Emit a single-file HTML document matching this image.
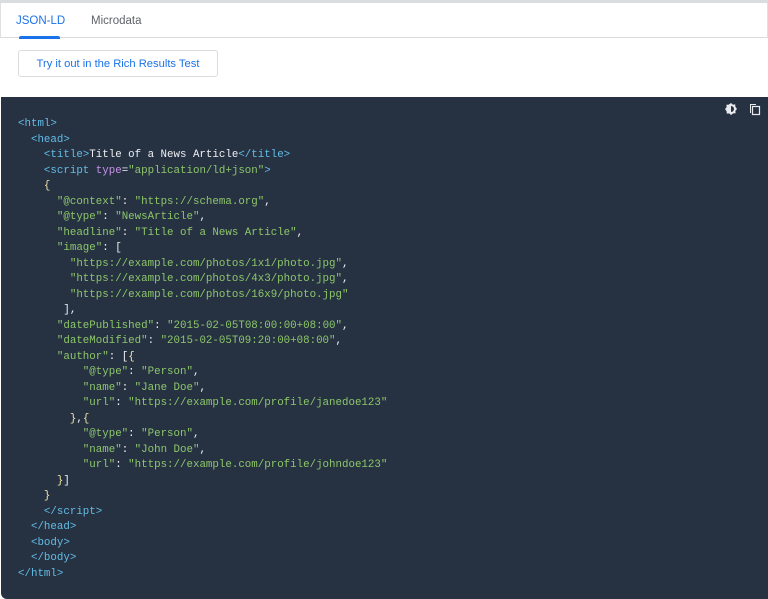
<!DOCTYPE html>
<html><head><meta charset="utf-8"><style>
body{margin:0;width:768px;height:599px;overflow:hidden;background:#fff;font-family:"Liberation Sans",sans-serif;position:relative}
.top{position:absolute;left:0;top:0;width:768px;height:3px;background:#dadce0}
.tabs{position:absolute;left:0;top:3px;width:768px;height:35px;border-bottom:1px solid #dadce0;border-left:1px solid #e0e0e0;border-right:1px solid #e0e0e0;box-sizing:border-box}
.tab{position:absolute;top:12px;font-size:11.5px;color:#5f6368}
.t1{left:15px;color:#1a73e8}
.ul{position:absolute;left:18px;top:33px;width:41px;height:3px;background:#1a73e8;border-radius:2px 2px 0 0}
.btn{position:absolute;left:18px;top:50px;width:200px;height:27px;border:1px solid #dadce0;border-radius:3px;box-sizing:border-box;color:#1a73e8;font-size:11.2px;text-align:center;line-height:27px}
.code{position:absolute;left:1px;top:97px;width:767px;height:502px;background:#263142;border-radius:0 0 0 6px}
pre{margin:0;position:absolute;left:18px;top:117px;font-family:"Liberation Mono",monospace;font-size:10.8px;line-height:15.5px;color:#eef0f2}
.t{color:#63bde6}.s{color:#8dc76a}.a{color:#c792ea}.b{color:#f0e6a8}
</style></head><body>
<div class="top"></div>
<div class="tabs"><span class="tab t1">JSON-LD</span><span class="tab" style="left:90px">Microdata</span><div class="ul"></div></div>
<div class="btn">Try it out in the Rich Results Test</div>
<div class="code">
<svg style="position:absolute;left:723px;top:5px" width="14" height="14" viewBox="0 0 14 14"><path d="M7 1l1.8 1.6 2.4-.2.2 2.4L13 7l-1.6 1.8.2 2.4-2.4.2L7 13l-1.8-1.6-2.4.2-.2-2.4L1 7l1.6-1.8-.2-2.4 2.4-.2z" fill="#e8eaed"/><path d="M7 4a3 3 0 0 1 0 6z" fill="#263142"/></svg>
<svg style="position:absolute;left:747px;top:5px" width="14" height="14" viewBox="0 0 14 14"><path d="M2 2h6v1H3v8H2z" fill="#e8eaed"/><rect x="4.5" y="4.5" width="7" height="8" fill="none" stroke="#e8eaed" stroke-width="1.2"/></svg>
</div>
<pre><span class="t">&lt;html&gt;</span>
  <span class="t">&lt;head&gt;</span>
    <span class="t">&lt;title&gt;</span>Title of a News Article<span class="t">&lt;/title&gt;</span>
    <span class="t">&lt;script</span> <span class="a">type</span>=<span class="s">"application/ld+json"</span><span class="t">&gt;</span>
    <span class="b">{</span>
      <span class="s">"@context"</span>: <span class="s">"https://schema.org"</span>,
      <span class="s">"@type"</span>: <span class="s">"NewsArticle"</span>,
      <span class="s">"headline"</span>: <span class="s">"Title of a News Article"</span>,
      <span class="s">"image"</span>: [
        <span class="s">"https://example.com/photos/1x1/photo.jpg"</span>,
        <span class="s">"https://example.com/photos/4x3/photo.jpg"</span>,
        <span class="s">"https://example.com/photos/16x9/photo.jpg"</span>
       ],
      <span class="s">"datePublished"</span>: <span class="s">"2015-02-05T08:00:00+08:00"</span>,
      <span class="s">"dateModified"</span>: <span class="s">"2015-02-05T09:20:00+08:00"</span>,
      <span class="s">"author"</span>: [<span class="b">{</span>
          <span class="s">"@type"</span>: <span class="s">"Person"</span>,
          <span class="s">"name"</span>: <span class="s">"Jane Doe"</span>,
          <span class="s">"url"</span>: <span class="s">"https://example.com/profile/janedoe123"</span>
        <span class="b">}</span>,<span class="b">{</span>
          <span class="s">"@type"</span>: <span class="s">"Person"</span>,
          <span class="s">"name"</span>: <span class="s">"John Doe"</span>,
          <span class="s">"url"</span>: <span class="s">"https://example.com/profile/johndoe123"</span>
      <span class="b">}</span>]
    <span class="b">}</span>
    <span class="t">&lt;/script&gt;</span>
  <span class="t">&lt;/head&gt;</span>
  <span class="t">&lt;body&gt;</span>
  <span class="t">&lt;/body&gt;</span>
<span class="t">&lt;/html&gt;</span></pre>
</body></html>
